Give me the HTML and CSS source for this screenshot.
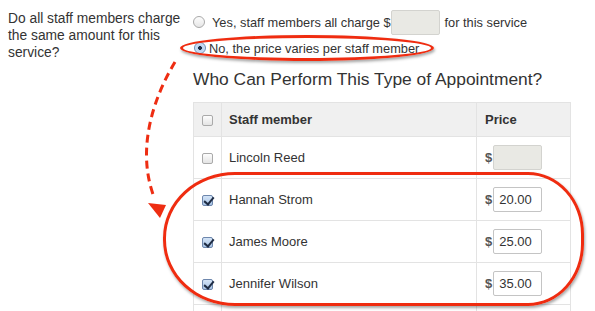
FILE: index.html
```html
<!DOCTYPE html>
<html>
<head>
<meta charset="utf-8">
<link rel="stylesheet" href="styles.css">
</head>
<body>
<div class="page">
  <div class="label">Do all staff members charge<br>the same amount for this<br>service?</div>
  <div class="main">
    <div class="opt opt1">
      <span class="radio"></span>
      <span class="opt-text">Yes, staff members all charge $</span>
      <span class="box disabled"></span>
      <span class="opt-text after">for this service</span>
    </div>
    <div class="opt opt2">
      <span class="radio on"></span>
      <span class="opt-text">No, the price varies per staff member</span>
    </div>
    <h2 class="heading">Who Can Perform This Type of Appointment?</h2>
    <table class="staff">
      <tr class="head">
        <th class="c-check"><span class="cb"></span></th>
        <th class="c-name">Staff member</th>
        <th class="c-price">Price</th>
      </tr>
      <tr>
        <td class="c-check"><span class="cb"></span></td>
        <td class="c-name">Lincoln Reed</td>
        <td class="c-price"><span class="dollar">$</span><span class="box disabled"></span></td>
      </tr>
      <tr>
        <td class="c-check"><span class="cb on"></span></td>
        <td class="c-name">Hannah Strom</td>
        <td class="c-price"><span class="dollar">$</span><span class="box">20.00</span></td>
      </tr>
      <tr>
        <td class="c-check"><span class="cb on"></span></td>
        <td class="c-name">James Moore</td>
        <td class="c-price"><span class="dollar">$</span><span class="box">25.00</span></td>
      </tr>
      <tr>
        <td class="c-check"><span class="cb on"></span></td>
        <td class="c-name">Jennifer Wilson</td>
        <td class="c-price"><span class="dollar">$</span><span class="box">35.00</span></td>
      </tr>
      <tr class="tail">
        <td class="c-check"></td>
        <td class="c-name"></td>
        <td class="c-price"></td>
      </tr>
    </table>
  </div>
</div>
<div class="ring ring-radio"></div>
<div class="ring ring-rows"></div>
<svg class="arrow" width="60" height="180" viewBox="0 0 60 180">
  <path d="M42 20 C 18 60, 4 110, 21 155" fill="none" stroke="#ee2d12" stroke-width="3" stroke-dasharray="8 5"/>
  <polygon points="15,161 33,163 27,176" fill="#ee2d12"/>
</svg>
</body>
</html>
```
FILE: styles.css
```css
* { box-sizing: border-box; }
html, body { margin: 0; padding: 0; background: #fff; }
body {
  font-family: "Liberation Sans", Arial, Helvetica, sans-serif;
  color: #333;
  font-size: 13px;
  width: 595px;
  height: 311px;
  overflow: hidden;
  position: relative;
}
.page {
  display: flex;
  padding: 9px 0 0 8px;
}
.label {
  width: 178px;
  flex: none;
  white-space: nowrap;
  line-height: 17px;
  font-size: 13.8px;
  padding-top: 1px;
}
.main {
  margin-left: 7px;
  width: 380px;
}
.opt {
  display: flex;
  align-items: center;
  height: 26px;
}
.opt1 { padding-left: 0; }
.opt2 { padding-left: 1px; }
.radio {
  width: 12px;
  height: 12px;
  border-radius: 50%;
  border: 1px solid #a9a9a9;
  background: linear-gradient(#fdfdfd, #e6e6e6);
  margin-right: 7px;
  flex: none;
  position: relative;
}
.opt2 .radio { margin-right: 3px; }
.radio.on {
  border-color: #6f8fb8;
  background: radial-gradient(circle, #1a2a44 0 1.6px, #b9d2ef 2.2px, #dceafa 100%);
}
.opt-text { white-space: nowrap; font-size: 12.8px; }
.opt-text.after { margin-left: 5px; }
.box {
  display: inline-block;
  width: 49px;
  height: 25px;
  border: 1px solid #c4c4c4;
  border-radius: 2px;
  background: #fff;
  font-size: 13px;
  line-height: 23px;
  padding-left: 5px;
  color: #333;
}
.box.disabled { background: #e9e9e4; border-color: #d3d3cf; }
.opt1 .box { margin-left: 0; }
.heading {
  margin: 6px 0 0 0;
  font-weight: normal;
  font-size: 17.4px;
  line-height: 24px;
  height: 35px;
}
.staff {
  border-collapse: collapse;
  width: 378px;
  border: 1px solid #e3e3e3;
  border-bottom: none;
}
.staff td, .staff th {
  border-top: 1px solid #e3e3e3;
  border-left: 1px solid #e3e3e3;
  height: 42px;
  padding: 0;
  text-align: left;
  vertical-align: middle;
}
.staff tr.tail td { height: 8px; }
.staff tr.head th {
  background: #f0f0f0;
  height: 34px;
  font-weight: bold;
  font-size: 13px;
}
.c-check { width: 28px; text-align: center !important; }
.c-name { padding-left: 7px !important; }
.c-price { width: 94px; padding-left: 8px !important; }
.dollar { font-weight: bold; color: #555; margin-right: 1px; vertical-align: middle; }
.c-price .box { vertical-align: middle; }
.cb {
  display: inline-block;
  width: 11px;
  height: 11px;
  border: 1px solid #aaa;
  border-radius: 2px;
  background: linear-gradient(#fdfdfd, #e4e4e4);
  vertical-align: middle;
  position: relative;
}
.cb.on {
  border-color: #6e87ad;
  background: linear-gradient(#d4e4f7, #a8c4e6);
}
.cb.on::after {
  content: "";
  position: absolute;
  left: 3px;
  top: -1px;
  width: 4px;
  height: 8px;
  border-right: 2px solid #1e2c44;
  border-bottom: 2px solid #1e2c44;
  transform: rotate(40deg);
}
.ring {
  position: absolute;
  border: 3px solid #ef2c10;
  box-shadow: 1px 2px 3px rgba(0,0,0,0.35);
}
.ring-radio {
  left: 180px;
  top: 35px;
  width: 254px;
  height: 26px;
  border-radius: 50%;
}
.ring-rows {
  left: 163px;
  top: 172px;
  width: 421px;
  height: 134px;
  border-radius: 72px 56px 56px 72px / 66px 62px 62px 66px;
}
.arrow {
  position: absolute;
  left: 133px;
  top: 42px;
}
```
